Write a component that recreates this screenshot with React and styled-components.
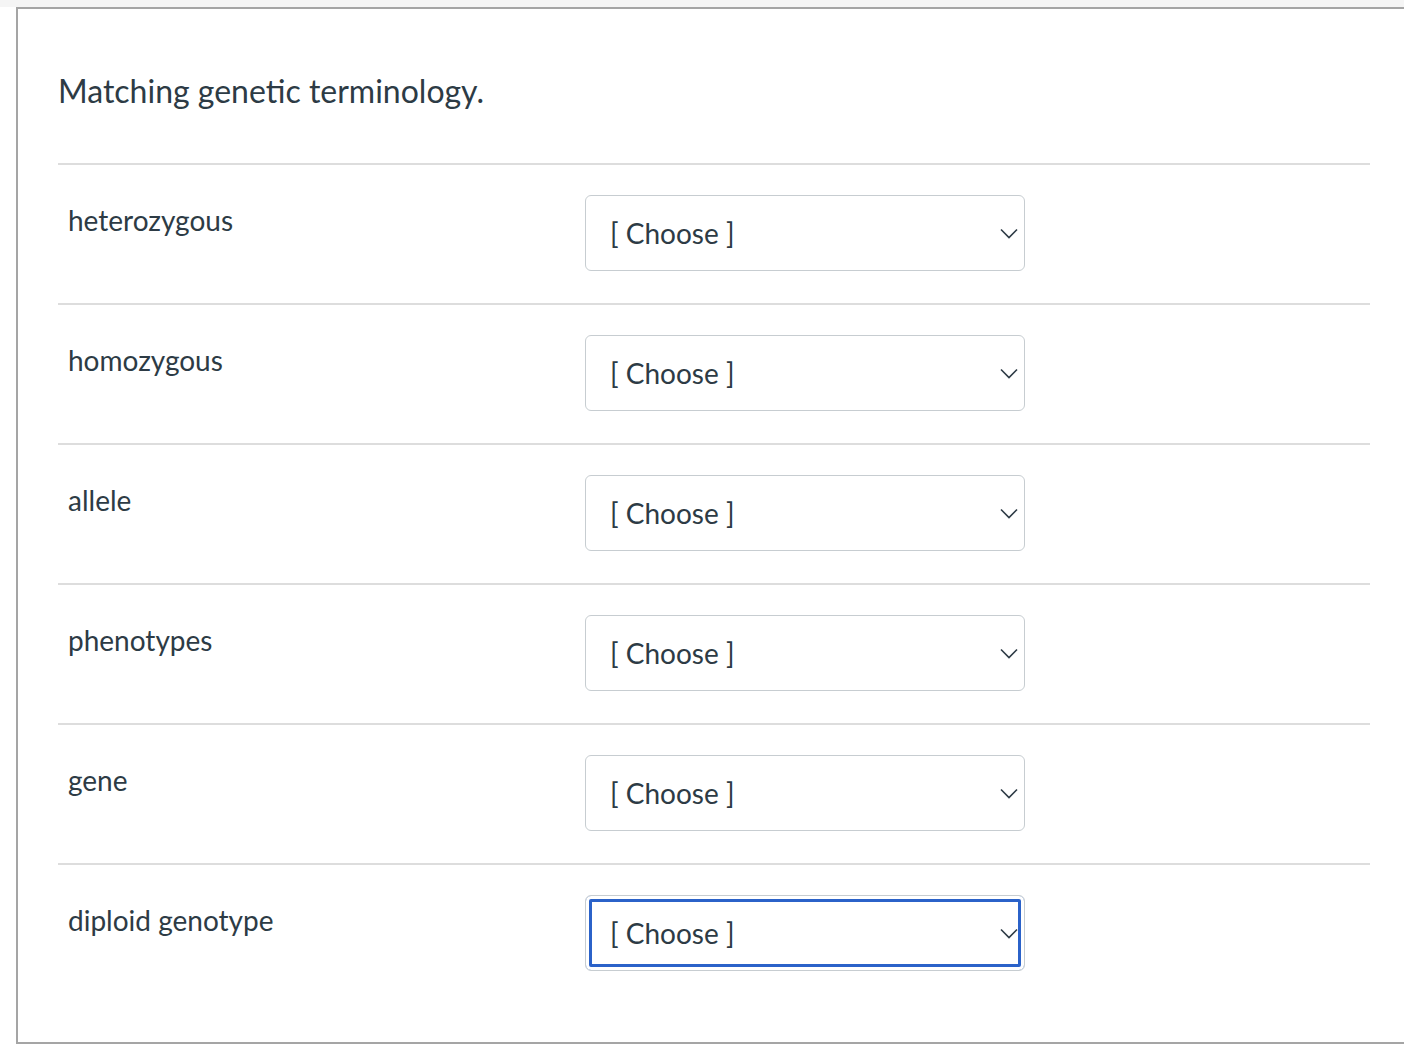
import React from "react";
import styled, { createGlobalStyle } from "styled-components";

const GlobalStyle = createGlobalStyle`
  html, body {
    margin: 0;
    padding: 0;
    background: #fff;
  }
  body {
    font-family: Lato, "Open Sans", "Liberation Sans", sans-serif;
    color: #2d3b45;
    overflow: hidden;
  }
`;

const terms = [
  "heterozygous",
  "homozygous",
  "allele",
  "phenotypes",
  "gene",
  "diploid genotype",
];

const Page = styled.div`
  min-height: 1058px;
  padding: 7px 0 0 16px;
  background: linear-gradient(#f5f5f5 0 7px, #fff 7px);
  box-sizing: border-box;
`;

const Card = styled.div`
  width: calc(100% + 20px);
  box-sizing: border-box;
  border: 2px solid #a5a5a5;
  border-right: none;
  background: #fff;
  padding: 0 0 39px 40px;
`;

const Title = styled.div`
  box-sizing: border-box;
  padding-top: 58px;
  height: 154px;
  font-size: 32px;
  line-height: 48px;
`;

const Rows = styled.div`
  width: 1312px;
`;

const Row = styled.div`
  display: flex;
  align-items: flex-start;
  border-top: 2px solid #dddddd;
  padding: 30px 0 32px 10px;
`;

const Label = styled.div`
  width: 517px;
  font-size: 28px;
  line-height: 42px;
  margin-top: 4px;
`;

const SelectWrap = styled.div`
  position: relative;
  width: 440px;
  height: 76px;
`;

const Select = styled.select`
  appearance: none;
  width: 100%;
  height: 100%;
  box-sizing: border-box;
  border: 1px solid #c7cdd1;
  border-radius: 6px;
  background: #fff;
  font-family: Lato, "Open Sans", "Liberation Sans", sans-serif;
  font-size: 28px;
  color: #2d3b45;
  padding: 0 40px 0 24px;
  margin: 0;
  outline: none;
  ${(p) =>
    p.$focused &&
    "box-shadow: inset 0 0 0 3px #fff, inset 0 0 0 6px #2b62c9;"}
`;

const Chevron = styled.svg`
  position: absolute;
  right: 7px;
  top: 33px;
  width: 18px;
  height: 11px;
  pointer-events: none;
`;

const App = () => {
  return (
    <>
      <GlobalStyle />
      <Page>
        <Card>
          <Title>Matching genetic terminology.</Title>
          <Rows>
            {terms.map((term, i) => (
              <Row key={term}>
                <Label>{term}</Label>
                <SelectWrap>
                  <Select $focused={i === terms.length - 1} defaultValue="">
                    <option value="">[ Choose ]</option>
                  </Select>
                  <Chevron viewBox="0 0 18 11">
                    <polyline
                      points="1,1.5 9,9.5 17,1.5"
                      fill="none"
                      stroke="#2d3b45"
                      strokeWidth="1.6"
                    />
                  </Chevron>
                </SelectWrap>
              </Row>
            ))}
          </Rows>
        </Card>
      </Page>
    </>
  );
};

export default App;
